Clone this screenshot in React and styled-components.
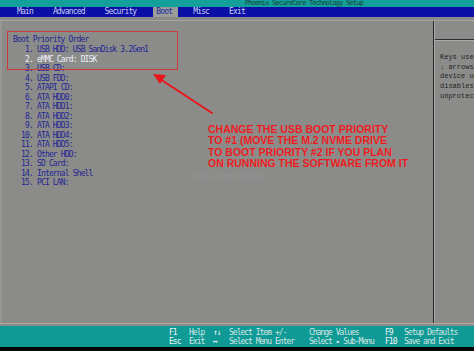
import React from 'react';
import styled, { createGlobalStyle } from 'styled-components';

const GlobalStyle = createGlobalStyle`
  html, body {
    margin: 0;
    padding: 0;
    background: #000;
  }
  #root {
    width: 474px;
    height: 351px;
    overflow: hidden;
  }
`

const bios = `
  font-family: "DejaVu Sans Mono", "Liberation Mono", monospace;
  font-size: 8px;
  letter-spacing: -0.85px;
  white-space: nowrap;
`

const Screen = styled.div`
  width: 474px;
  height: 351px;
  display: flex;
  flex-direction: column;
  background: #8b8c8a;
  overflow: hidden;
`
const TitleBar = styled.div`
  height: 7px;
  background: #14a09a;
  overflow: hidden;
  display: flex;
  padding-left: 245px;
`
const Title = styled.div`
  ${bios}
  font-size: 7px;
  color: #14403c;
  line-height: 7px;
`
const MenuBar = styled.div`
  height: 10px;
  background: #0a10a6;
  display: flex;
  gap: 12px;
  padding-left: 13px;
`
const Tab = styled.div`
  ${bios}
  line-height: 10px;
  padding: ${p => (p.active ? '0 6px 0 3px' : '0 4px')};
  margin-left: ${p => (p.active ? '1px' : '0')};
  margin-right: ${p => (p.active ? '-1px' : '0')};
  color: ${p => (p.active ? '#1c2a9a' : '#c9cff2')};
  background: ${p => (p.active ? '#9a9c9a' : 'transparent')};
`
const Rule = styled.div`
  height: 3px;
  border-bottom: 1px solid #a4a5a3;
`
const Body = styled.div`
  flex: 1;
  display: flex;
  border-left: 2px solid #969795;
  min-height: 0;
`
const MainPanel = styled.div`
  position: relative;
  flex: 0 0 432px;
  box-sizing: border-box;
  padding: 14px 0 0 11px;
  border-right: 1px solid #262726;
  box-shadow: 1px 0 0 #a9aaa8;
`
const Heading = styled.div`
  ${bios}
  color: #1f2594;
  line-height: 9.5px;
  margin-bottom: 0.5px;
`
const Row = styled.div`
  ${bios}
  display: flex;
  line-height: 9.5px;
  color: ${p => (p.selected ? '#eef0fa' : '#1f2594')};
`
const Num = styled.span`
  width: 20px;
  text-align: right;
`
const Label = styled.span`
  margin-left: 4px;
`
const Highlight = styled.div`
  position: absolute;
  left: 5px;
  top: 10px;
  width: 169px;
  height: 37px;
  border: 1px solid #cf3a3c;
`
const Note = styled.div`
  position: absolute;
  left: 206px;
  top: 102.5px;
  font-family: "Liberation Sans", Arial, sans-serif;
  font-weight: bold;
  font-size: 10.5px;
  line-height: 11.6px;
  color: #ee1c22;
  white-space: nowrap;
`
const Watermark = styled.div`
  position: absolute;
  left: 190px;
  top: 151px;
  font-family: "Liberation Sans", Arial, sans-serif;
  font-size: 9px;
  font-weight: bold;
  color: rgba(255, 255, 255, 0.07);
`
const Arrow = styled.svg`
  position: absolute;
  left: 0;
  top: 0;
  pointer-events: none;
`
const SidePanel = styled.div`
  flex: 1;
  min-width: 0;
  display: flex;
  flex-direction: column;
  margin-left: 1px;
  overflow: hidden;
`
const SideHead = styled.div`
  height: 18px;
  border-bottom: 1px solid #2c2d2c;
  box-shadow: 0 1px 0 #a9aaa8;
`
const Help = styled.div`
  padding: 13px 0 0 5px;
`
const HelpLine = styled.div`
  font-family: "Liberation Mono", "DejaVu Sans Mono", monospace;
  font-size: 7px;
  line-height: 9.7px;
  color: #1e1e1e;
  white-space: nowrap;
`
const Spacer = styled.div`
  height: 2px;
  border-top: 1px solid #adaeac;
`
const Footer = styled.div`
  height: 21px;
  background: #0f9a95;
  display: grid;
  grid-template-columns: 20px 24px 16px 46px 34px 76px 19px 1fr;
  grid-auto-rows: 8.5px;
  padding: 3px 0 0 169px;
  box-sizing: border-box;
`
const Key = styled.div`
  ${bios}
  letter-spacing: -1px;
  line-height: 8.5px;
  color: ${p => (p.bright ? '#f2f6f4' : '#d6e6e4')};
`
const Bottom = styled.div`
  height: 4px;
  background: #050505;
`

const tabs = ['Main', 'Advanced', 'Security', 'Boot', 'Misc', 'Exit']

const order = [
  'USB HDD: USB SanDisk 3.2Gen1',
  'eMMC Card: DISK',
  'USB CD:',
  'USB FDD:',
  'ATAPI CD:',
  'ATA HDD0:',
  'ATA HDD1:',
  'ATA HDD2:',
  'ATA HDD3:',
  'ATA HDD4:',
  'ATA HDD5:',
  'Other HDD:',
  'SD Card:',
  'Internal Shell',
  'PCI LAN:',
]

const help = [
  'Keys used to view or configure',
  '\u2193 arrows select a device.',
  'device up or down.',
  'disables a device.',
  'unprotected legacy device.',
]

const keys = [
  ['F1', 'Help', '\u2191\u2193', 'Select Item', '+/-', 'Change Values', 'F9', 'Setup Defaults'],
  ['Esc', 'Exit', '\u2194', 'Select Menu', 'Enter', 'Select \u25B8 Sub-Menu', 'F10', 'Save and Exit'],
]

export default function App() {
  return (
    <>
      <GlobalStyle />
      <Screen>
        <TitleBar>
          <Title>Phoenix SecureCore Technology Setup</Title>
        </TitleBar>
        <MenuBar>
          {tabs.map(t => (
            <Tab key={t} active={t === 'Boot'}>{t}</Tab>
          ))}
        </MenuBar>
        <Rule />
        <Body>
          <MainPanel>
            <Heading>Boot Priority Order</Heading>
            {order.map((item, i) => (
              <Row key={item} selected={i === 1}>
                <Num>{i + 1}.</Num>
                <Label>{item}</Label>
              </Row>
            ))}
            <Highlight />
            <Watermark>PAS COMPARER</Watermark>
            <Arrow width="432" height="302" viewBox="0 0 432 302">
              <line x1="210" y1="92" x2="158" y2="58" stroke="#e8161c" strokeWidth="2" strokeLinecap="round" />
              <polygon points="151,53 164,54 158,63" fill="#e8161c" />
            </Arrow>
            <Note>
              <div>CHANGE THE USB BOOT PRIORITY</div>
              <div>TO #1 (MOVE THE M.2 NVME DRIVE</div>
              <div>TO BOOT PRIORITY #2 IF YOU PLAN</div>
              <div>ON RUNNING THE SOFTWARE FROM IT</div>
            </Note>
          </MainPanel>
          <SidePanel>
            <SideHead />
            <Help>
              {help.map(h => (
                <HelpLine key={h}>{h}</HelpLine>
              ))}
            </Help>
          </SidePanel>
        </Body>
        <Spacer />
        <Footer>
          {keys.map((row, r) =>
            row.map((k, c) => (
              <Key key={r + '-' + c} bright={c % 2 === 0 && c !== 4}>{k}</Key>
            ))
          )}
        </Footer>
        <Bottom />
      </Screen>
    </>
  )
}
